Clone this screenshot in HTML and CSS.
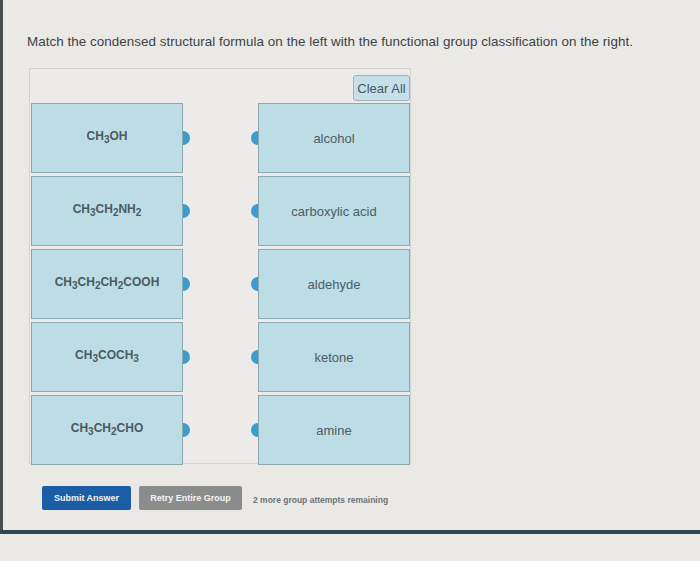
FILE: index.html
```html
<!DOCTYPE html>
<html lang="en">
<head>
<meta charset="utf-8">
<title>Functional group matching</title>
<link rel="stylesheet" href="styles.css">
</head>
<body>
<div class="frame">
  <p class="prompt">Match the condensed structural formula on the left with the functional group classification on the right.</p>

  <div class="board">
    <div class="toolbar">
      <button class="clear">Clear All</button>
    </div>
    <div class="columns">
      <div class="col col-left">
        <div class="card src"><span class="formula">CH<sub>3</sub>OH</span><i class="nub"></i></div>
        <div class="card src"><span class="formula">CH<sub>3</sub>CH<sub>2</sub>NH<sub>2</sub></span><i class="nub"></i></div>
        <div class="card src"><span class="formula">CH<sub>3</sub>CH<sub>2</sub>CH<sub>2</sub>COOH</span><i class="nub"></i></div>
        <div class="card src"><span class="formula">CH<sub>3</sub>COCH<sub>3</sub></span><i class="nub"></i></div>
        <div class="card src"><span class="formula">CH<sub>3</sub>CH<sub>2</sub>CHO</span><i class="nub"></i></div>
      </div>
      <div class="col col-right">
        <div class="card dst"><i class="nub"></i><span class="label">alcohol</span></div>
        <div class="card dst"><i class="nub"></i><span class="label">carboxylic acid</span></div>
        <div class="card dst"><i class="nub"></i><span class="label">aldehyde</span></div>
        <div class="card dst"><i class="nub"></i><span class="label">ketone</span></div>
        <div class="card dst"><i class="nub"></i><span class="label">amine</span></div>
      </div>
    </div>
  </div>

  <div class="actions">
    <button class="btn btn-submit">Submit Answer</button>
    <button class="btn btn-retry">Retry Entire Group</button>
    <span class="attempts">2 more group attempts remaining</span>
  </div>
</div>
<div class="rule"></div>
</body>
</html>
```

FILE: styles.css
```css
html, body {
  margin: 0;
  padding: 0;
}

body {
  background: #eae9e6;
  font-family: "Liberation Sans", Arial, sans-serif;
  color: #3f4a50;
  width: 700px;
  height: 561px;
  overflow: hidden;
}

.frame {
  height: 530px;
  border-left: 3px solid #4a4d50;
  box-sizing: border-box;
  padding: 33px 0 0 24px;
}

.prompt {
  margin: 0;
  font-size: 13.4px;
  line-height: 18px;
  color: #3c4346;
  letter-spacing: 0.05px;
}

.board {
  margin: 17px 0 0 2px;
  width: 382px;
  height: 396px;
  border: 1px solid #d2d3d2;
  background: #ecebe9;
  box-sizing: border-box;
  padding: 0 0 0 1px;
}

.toolbar {
  display: flex;
  justify-content: flex-end;
  padding: 6px 0 0;
  height: 34px;
  box-sizing: border-box;
}

.clear {
  font-family: "Liberation Sans", Arial, sans-serif;
  font-size: 13px;
  color: #47585f;
  background: #c5e0e8;
  border: 1px solid #9db4bb;
  border-radius: 3px;
  height: 26px;
  width: 57px;
  padding: 0;
}

.columns {
  display: flex;
  justify-content: space-between;
}

.col {
  display: flex;
  flex-direction: column;
  gap: 3px;
  width: 152px;
}

.card {
  position: relative;
  height: 70px;
  background: #bcdce6;
  border: 1px solid #8ea8b0;
  box-sizing: border-box;
  display: flex;
  align-items: center;
  justify-content: center;
}

.formula {
  font-size: 12px;
  font-weight: bold;
  color: #4d5a60;
  margin-top: -4px;
}

.formula sub {
  font-size: 10px;
  vertical-align: -3px;
  line-height: 0;
}

.label {
  font-size: 13px;
  color: #4d5c63;
}

/* half-circle connector pegs */
.nub {
  position: absolute;
  top: 27px;
  width: 7px;
  height: 14px;
  background: #3a9dcc;
}

.src .nub {
  right: -8px;
  border-radius: 0 7px 7px 0;
}

.dst .nub {
  left: -8px;
  border-radius: 7px 0 0 7px;
}

.actions {
  display: flex;
  align-items: center;
  gap: 8px;
  margin: 22px 0 0 15px;
}

.btn {
  font-family: "Liberation Sans", Arial, sans-serif;
  font-size: 9px;
  font-weight: bold;
  color: #f2f4f6;
  border: none;
  border-radius: 2px;
  height: 24px;
  padding: 0;
}

.btn-submit {
  width: 89px;
  background: #1b5ea6;
}

.btn-retry {
  width: 103px;
  background: #8b8d8c;
}

.attempts {
  margin-left: 3px;
  font-size: 8.5px;
  font-weight: bold;
  color: #6c7478;
  padding-top: 4px;
}

.rule {
  height: 4px;
  background: #2b4850;
}
```
